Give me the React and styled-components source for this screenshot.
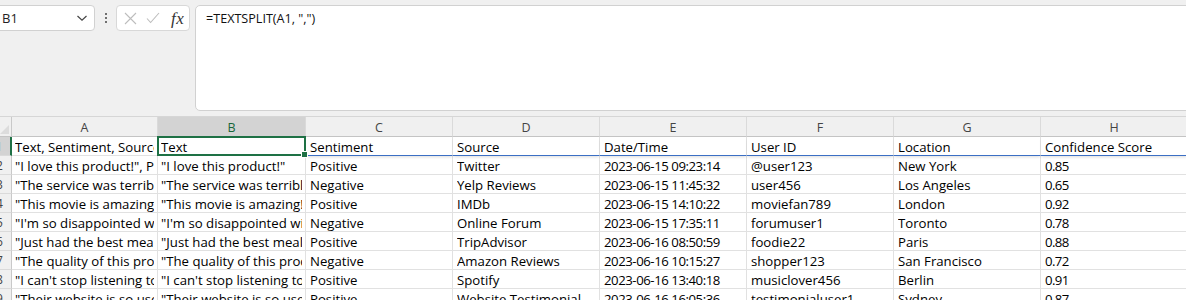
import React from "react";
import styled, { createGlobalStyle, css } from "styled-components";

const GlobalStyle = createGlobalStyle`
  html, body { margin: 0; padding: 0; background: #f0f0f0; overflow: hidden; }
  body { font-family: "Open Sans", "Noto Sans", sans-serif; color: #000; }
`;

const Page = styled.div`
  width: 1186px;
  height: 300px;
  overflow: hidden;
  display: flex;
  flex-direction: column;
`;

const Bar = styled.div`
  display: flex;
  align-items: flex-start;
  height: 116px;
  padding-top: 5px;
  box-sizing: border-box;
  flex-shrink: 0;
`;

const NameBox = styled.div`
  width: 101px;
  height: 26px;
  margin-left: -6px;
  box-sizing: border-box;
  background: #fff;
  border: 1px solid #d1d1d1;
  border-radius: 4px;
  display: flex;
  align-items: center;
  justify-content: space-between;
  padding: 0 6px 0 7px;
  font-size: 13px;
  color: #222;
`;

const Kebab = styled.div`
  width: 21px;
  height: 26px;
  display: flex;
  flex-direction: column;
  align-items: center;
  justify-content: center;
  gap: 2px;
  span {
    width: 2px;
    height: 2px;
    border-radius: 1px;
    background: #444;
  }
`;

const FuncBox = styled.div`
  width: 74px;
  height: 26px;
  box-sizing: border-box;
  background: #fff;
  border: 1px solid #d8d8d8;
  border-radius: 4px;
  display: flex;
  align-items: center;
  padding: 0 4px 0 7px;
  gap: 9px;
`;

const Fx = styled.span`
  font-family: "Liberation Serif", "DejaVu Serif", serif;
  font-style: italic;
  font-size: 17px;
  color: #333;
  margin-left: 2px;
  line-height: 1;
  letter-spacing: 0.5px;
`;

const FormulaInput = styled.div`
  flex: 1;
  margin-left: 5px;
  margin-right: -10px;
  height: 106px;
  box-sizing: border-box;
  background: #fff;
  border: 1px solid #d1d1d1;
  border-radius: 5px;
  padding: 3px 10px;
  font-size: 12.6px;
  line-height: 19px;
  color: #111;
`;

const Sheet = styled.div`
  display: grid;
  grid-template-columns: 24px 146px 148px 147px 147px 147px 147px 147px 147px;
  grid-auto-rows: 19px;
  grid-template-rows: 20px;
  margin-left: -12px;
  border-top: 1px solid #d6d6d6;
  background: #fff;
`;

const Corner = styled.div`
  background: #f0f0f0;
  border-right: 1px solid #c9c9c9;
  border-bottom: 1px solid #c4c4c4;
  position: relative;
  &::after {
    content: "";
    position: absolute;
    right: 2px;
    bottom: 2px;
    border-left: 9px solid transparent;
    border-bottom: 9px solid #dcdcdc;
  }
`;

const ColHead = styled.div`
  box-sizing: border-box;
  background: ${(p) => (p.$active ? "#d3d3d3" : "#f0f0f0")};
  color: ${(p) => (p.$active ? "#17663a" : "#444")};
  border-right: 1px solid #dadada;
  border-bottom: 1px solid #c4c4c4;
  display: flex;
  align-items: center;
  justify-content: center;
  padding-top: 1px;
  font-size: 12.5px;
`;

const RowHead = styled.div`
  box-sizing: border-box;
  background: ${(p) => (p.$active ? "#d3d3d3" : "#f0f0f0")};
  border-right: ${(p) => (p.$active ? "2px solid #1e7145" : "1px solid #c9c9c9")};
  border-bottom: 1px solid #dadada;
  display: flex;
  align-items: center;
  justify-content: center;
  font-size: 12px;
  color: #444;
`;

const Cell = styled.div`
  box-sizing: border-box;
  background: #fff;
  border-right: 1px solid #e1e1e1;
  border-bottom: 1px solid #e1e1e1;
  padding: 0 3px 0 ${(p) => (p.$pad != null ? p.$pad : 4)}px;
  font-size: 13.2px;
  line-height: 20px;
  white-space: nowrap;
  overflow: hidden;
  letter-spacing: ${(p) => p.$ls || 0}px;
  position: relative;
  ${(p) =>
    p.$blue &&
    css`
      border-bottom: 1px solid #3b6fc4;
      box-shadow: 0 2px 3px -1px rgba(0, 0, 0, 0.14);
      z-index: 1;
    `}
  ${(p) =>
    p.$selected &&
    css`
      overflow: visible;
      z-index: 2;
    `}
`;

const CellText = styled.span`
  display: block;
  height: 18px;
  overflow: hidden;
`;

const Selection = styled.div`
  position: absolute;
  top: -1px;
  left: -1px;
  right: -1px;
  bottom: -1px;
  border: 2px solid #1e7145;
  pointer-events: none;
`;

const Handle = styled.div`
  position: absolute;
  right: -4px;
  bottom: -4px;
  width: 5px;
  height: 5px;
  background: #1e7145;
  border: 1px solid #fff;
`;

const Chevron = () => (
  <svg width="12" height="8" viewBox="0 0 12 8" fill="none">
    <path d="M1.5 2 L6 6.2 L10.5 2" stroke="#444" strokeWidth="1.2" />
  </svg>
);

const XIcon = () => (
  <svg width="13" height="13" viewBox="0 0 13 13" fill="none">
    <path d="M1 1 L12 12 M12 1 L1 12" stroke="#bdbdbd" strokeWidth="1.1" />
  </svg>
);

const CheckIcon = () => (
  <svg width="14" height="12" viewBox="0 0 14 12" fill="none">
    <path d="M1 6.5 L4.6 10.5 L13 1" stroke="#bdbdbd" strokeWidth="1.1" />
  </svg>
);

const letters = ["A", "B", "C", "D", "E", "F", "G", "H"];

const header = ["Text", "Sentiment", "Source", "Date/Time", "User ID", "Location", "Confidence Score"];

const rows = [
  ['"I love this product!"', "Positive", "Twitter", "2023-06-15 09:23:14", "@user123", "New York", "0.85"],
  ['"The service was terrible and slow."', "Negative", "Yelp Reviews", "2023-06-15 11:45:32", "user456", "Los Angeles", "0.65"],
  ['"This movie is amazing! Must watch."', "Positive", "IMDb", "2023-06-15 14:10:22", "moviefan789", "London", "0.92"],
  ['"I\'m so disappointed with the update."', "Negative", "Online Forum", "2023-06-15 17:35:11", "forumuser1", "Toronto", "0.78"],
  ['"Just had the best meal of my life."', "Positive", "TripAdvisor", "2023-06-16 08:50:59", "foodie22", "Paris", "0.88"],
  ['"The quality of this product is poor."', "Negative", "Amazon Reviews", "2023-06-16 10:15:27", "shopper123", "San Francisco", "0.72"],
  ['"I can\'t stop listening to this album!"', "Positive", "Spotify", "2023-06-16 13:40:18", "musiclover456", "Berlin", "0.91"],
  ['"Their website is so user-friendly."', "Positive", "Website Testimonial", "2023-06-16 16:05:36", "testimonialuser1", "Sydney", "0.87"],
];

const spacing = [0, 0, 0, -0.45, 0, 0, -0.6];

export default function App() {
  return (
    <Page>
      <GlobalStyle />
      <Bar>
        <NameBox>
          <span>B1</span>
          <Chevron />
        </NameBox>
        <Kebab>
          <span />
          <span />
          <span />
        </Kebab>
        <FuncBox>
          <XIcon />
          <CheckIcon />
          <Fx>fx</Fx>
        </FuncBox>
        <FormulaInput>=TEXTSPLIT(A1, ",")</FormulaInput>
      </Bar>
      <Sheet>
        <Corner />
        {letters.map((l) => (
          <ColHead key={l} $active={l === "B"}>
            {l}
          </ColHead>
        ))}

        <RowHead $active>1</RowHead>
        <Cell $pad={3}>
          <CellText>{header.join(", ")}</CellText>
        </Cell>
        {header.map((h, i) => (
          <Cell key={h} $pad={i === 0 ? 3 : 4} $selected={i === 0} $blue={i > 0}>
            <CellText>{h}</CellText>
            {i === 0 && (
              <Selection>
                <Handle />
              </Selection>
            )}
          </Cell>
        ))}

        {rows.map((r, ri) => (
          <React.Fragment key={ri}>
            <RowHead>{ri + 2}</RowHead>
            <Cell $pad={3}>
              <CellText>{r.join(", ")}</CellText>
            </Cell>
            {r.map((v, ci) => (
              <Cell key={ci} $pad={ci === 0 ? 3 : 4} $ls={spacing[ci]}>
                <CellText>{v}</CellText>
              </Cell>
            ))}
          </React.Fragment>
        ))}
      </Sheet>
    </Page>
  );
}
